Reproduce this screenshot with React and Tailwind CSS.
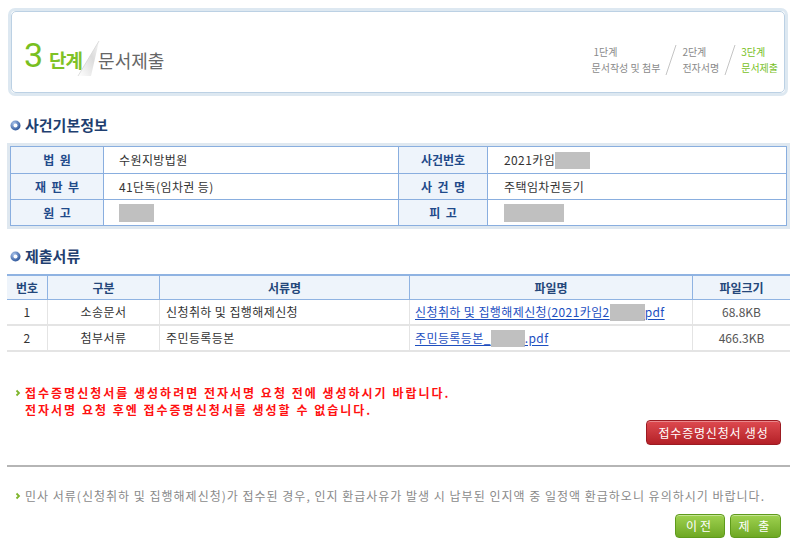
import React from "react";

const Bullet = ({ id }) => (
  <svg width="11" height="11" viewBox="0 0 11 11" className="shrink-0">
    <defs>
      <radialGradient id={id} cx="35%" cy="30%" r="75%">
        <stop offset="0" stopColor="#a9c3ec" />
        <stop offset="1" stopColor="#2a5398" />
      </radialGradient>
    </defs>
    <circle cx="5.5" cy="5.5" r="5" fill={`url(#${id})`} />
    <circle cx="5.5" cy="5.5" r="2" fill="#fff" />
  </svg>
);

const Chevron = () => (
  <svg width="6" height="8" viewBox="0 0 6 8" className="shrink-0">
    <polyline points="1.5,1.5 4,4 1.5,6.5" fill="none" stroke="#7db42a" strokeWidth="1.8" />
  </svg>
);

const StepSlash = () => (
  <svg width="14" height="32" viewBox="0 0 14 32" className="shrink-0">
    <line x1="12" y1="1" x2="2" y2="31" stroke="#c4c4c4" strokeWidth="1" />
  </svg>
);

const infoRows = [
  ["법 원", "수원지방법원", "사건번호", "2021카임"],
  ["재 판 부", "41단독(임차권 등)", "사 건 명", "주택임차권등기"],
  ["원 고", "", "피 고", ""],
];

const docs = [
  { no: "1", kind: "소송문서", name: "신청취하 및 집행해제신청", file: ["신청취하 및 집행해제신청(2021카임2", "pdf"], size: "68.8KB" },
  { no: "2", kind: "첨부서류", name: "주민등록등본", file: ["주민등록등본_", ".pdf"], size: "466.3KB" },
];

export default function App() {
  return (
    <div className="w-[795px] h-[546px] bg-white overflow-hidden font-['Noto_Sans_CJK_KR','Noto_Sans',sans-serif] text-[#333]">
      {/* Step header */}
      <div className="ml-[8px] mt-[8px] w-[780px] h-[88px] rounded-[7px] border-[3px] border-[#dde8f1] bg-white">
        <div className="h-full rounded-[5px] border border-[#bcd1e4] flex items-end justify-between pl-[12px] pr-[6px] pb-[16px]">
          <div className="flex items-end h-[40px] mb-[4px]">
            <span className="font-['Roboto',sans-serif] text-[34px] leading-[34px] text-[#79bf1f]">3</span>
            <span className="ml-[6px] text-[19px] leading-[22px] font-bold tracking-[-1px] text-[#7fc226] mb-[1px]">단계</span>
            <svg width="26" height="38" viewBox="0 0 26 38" className="ml-[-8px] mb-[-6px]">
              <defs>
                <linearGradient id="curl" x1="0" y1="1" x2="1" y2="0">
                  <stop offset="0" stopColor="#ffffff" />
                  <stop offset="0.6" stopColor="#dcdcdc" />
                  <stop offset="1" stopColor="#f4f4f4" />
                </linearGradient>
              </defs>
              <polygon points="25,1 4,36 17,36" fill="url(#curl)" />
              <line x1="25" y1="1" x2="4" y2="36" stroke="#d6d6d6" strokeWidth="0.8" />
            </svg>
            <span className="ml-[-2px] text-[18px] leading-[22px] text-[#666] mb-[1px]">문서제출</span>
          </div>
          <div className="flex items-center text-[10px] leading-[16px]">
            <div className="text-[#8a8a8a]">
              <div className="pl-[2px]">1단계</div>
              <div>문서작성 및 첨부</div>
            </div>
            <div className="mx-[4px]"><StepSlash /></div>
            <div className="text-[#8a8a8a]">
              <div>2단계</div>
              <div>전자서명</div>
            </div>
            <div className="mx-[4px]"><StepSlash /></div>
            <div className="text-[#79bf1f]">
              <div>3단계</div>
              <div>문서제출</div>
            </div>
          </div>
        </div>
      </div>

      {/* 사건기본정보 */}
      <div className="ml-[10px] mt-[18px] h-[22px] flex items-center gap-[4px]">
        <Bullet id="b1" />
        <span className="text-[15px] font-bold text-[#1f3f70]">사건기본정보</span>
      </div>
      <div className="ml-[7px] mt-[7px] w-[783px] p-[3px] bg-[#dfe8f0]">
        <div className="border border-[#89aedf] bg-white">
          {infoRows.map((r, i) => (
            <div
              key={i}
              className={`grid grid-cols-[93px_294px_90px_1fr] h-[26px] text-[12px] ${i > 0 ? "border-t border-[#89aedf]" : ""}`}
            >
              <div className="bg-[#eef4fb] border-r border-[#89aedf] flex items-center justify-center font-bold text-[#1f4a8a] whitespace-pre">
                {r[0].split(" ").join("  ")}
              </div>
              <div className="flex items-center pl-[15px] tracking-[0.4px]">
                {i === 2 ? <span className="w-[35px] h-[18px] bg-[#c0c0c0]" /> : r[1]}
              </div>
              <div className="bg-[#eef4fb] border-x border-[#89aedf] flex items-center justify-center font-bold text-[#1f4a8a] whitespace-pre">
                {r[2].split(" ").join("  ")}
              </div>
              <div className="flex items-center pl-[16px] tracking-[0.4px]">
                {r[3]}
                {i === 0 && <span className="w-[35px] h-[17px] bg-[#c0c0c0]" />}
                {i === 2 && <span className="w-[60px] h-[18px] bg-[#c0c0c0]" />}
              </div>
            </div>
          ))}
        </div>
      </div>

      {/* 제출서류 */}
      <div className="ml-[10px] mt-[16px] h-[22px] flex items-center gap-[4px]">
        <Bullet id="b2" />
        <span className="text-[15px] font-bold text-[#1f3f70]">제출서류</span>
      </div>
      <div className="ml-[7px] mt-[7px] w-[783px] text-[12px]">
        <div className="grid grid-cols-[41px_112px_250px_283px_1fr] h-[26px] border-t-2 border-b border-[#8fb3e2] bg-[#eef4fb] font-bold text-[#24477a]">
          <div className="flex items-center justify-center border-r border-[#8fb3e2]">번호</div>
          <div className="flex items-center justify-center border-r border-[#8fb3e2]">구분</div>
          <div className="flex items-center justify-center border-r border-[#8fb3e2]">서류명</div>
          <div className="flex items-center justify-center border-r border-[#8fb3e2]">파일명</div>
          <div className="flex items-center justify-center">파일크기</div>
        </div>
        {docs.map((d) => (
          <div key={d.no} className="grid grid-cols-[41px_112px_250px_283px_1fr] h-[26px] border-b-2 border-[#e4e4e4] tracking-[0.4px]">
            <div className="flex items-center justify-center border-r border-[#e4e4e4]">{d.no}</div>
            <div className="flex items-center justify-center border-r border-[#e4e4e4]">{d.kind}</div>
            <div className="flex items-center pl-[6px] border-r border-[#e4e4e4]">{d.name}</div>
            <div className="flex items-center pl-[5px] border-r border-[#e4e4e4]">
              <span className="text-[#1d4fbf] underline underline-offset-2 flex items-center">
                {d.file[0]}
                <span className={`${d.no === "1" ? "w-[35px]" : "w-[34px]"} h-[17px] bg-[#c0c0c0] inline-block`} />
                {d.file[1]}
              </span>
            </div>
            <div className="flex items-center justify-center text-[#555] tracking-normal">{d.size}</div>
          </div>
        ))}
      </div>

      {/* warning */}
      <div className="ml-[15px] mt-[32px] text-[12px] leading-[17px] font-bold text-[#ff1010] tracking-[2px]">
        <div className="flex items-center gap-[4px]">
          <Chevron />
          <span>접수증명신청서를 생성하려면 전자서명 요청 전에 생성하시기 바랍니다.</span>
        </div>
        <div className="pl-[10px]">전자서명 요청 후엔 접수증명신청서를 생성할 수 없습니다.</div>
      </div>
      <div className="mt-[2px] mr-[14px] flex justify-end">
        <button className="w-[135px] h-[25px] rounded-[4px] border border-[#9c1b22] bg-gradient-to-b from-[#de4a50] to-[#b41f27] text-white text-[12px] tracking-[0.8px] shadow-[inset_0_1px_0_rgba(255,255,255,0.35)]">
          접수증명신청서 생성
        </button>
      </div>

      <div className="ml-[7px] mt-[20px] w-[783px] h-[2px] bg-[#b5b5b5]" />

      <div className="ml-[15px] mt-[20px] flex items-center gap-[4px] text-[12px] text-[#8a8a8a] tracking-[1px]">
        <Chevron />
        <span>민사 서류(신청취하 및 집행해제신청)가 접수된 경우, 인지 환급사유가 발생 시 납부된 인지액 중 일정액 환급하오니 유의하시기 바랍니다.</span>
      </div>

      <div className="mt-[9px] mr-[14px] flex justify-end gap-[5px]">
        <button className="w-[50px] h-[24px] rounded-[4px] border border-[#5f9b1c] bg-gradient-to-b from-[#9fd24f] to-[#6ea823] text-white text-[12px] tracking-[3px] shadow-[inset_0_1px_0_rgba(255,255,255,0.4)]">
          이전
        </button>
        <button className="w-[51px] h-[24px] rounded-[4px] border border-[#5f9b1c] bg-gradient-to-b from-[#9fd24f] to-[#6ea823] text-white text-[12px] tracking-[3px] shadow-[inset_0_1px_0_rgba(255,255,255,0.4)]">
          제 출
        </button>
      </div>
    </div>
  );
}
